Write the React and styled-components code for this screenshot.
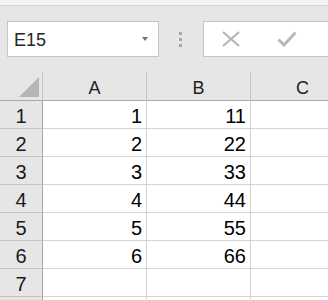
import React from "react";
import styled, { createGlobalStyle } from "styled-components";

const GlobalStyle = createGlobalStyle`
  html, body {
    margin: 0;
    padding: 0;
    background: #ffffff;
    overflow: hidden;
  }
  body {
    font-family: "Liberation Sans", Arial, sans-serif;
  }
`;

const Window = styled.div`
  width: 328px;
  height: 300px;
  overflow: hidden;
  background: #ffffff;
`;

const TopStrip = styled.div`
  height: 5px;
  background: #f3f3f3;
  border-bottom: 1px solid #d4d4d4;
`;

const Toolbar = styled.div`
  display: flex;
  align-items: center;
  height: 67px;
  box-sizing: border-box;
  padding: 15px 0 16px 7px;
  background: #e6e6e6;
`;

const NameBox = styled.div`
  box-sizing: border-box;
  width: 152px;
  height: 36px;
  display: flex;
  align-items: flex-start;
  justify-content: space-between;
  padding: 2px 10px 0 6px;
  background: #ffffff;
  border: 1px solid #c6c6c6;
  font-size: 18px;
  line-height: 32px;
  color: #262626;
`;

const DropArrow = styled.span`
  width: 0;
  height: 0;
  margin-top: 13px;
  border-left: 3.5px solid transparent;
  border-right: 3.5px solid transparent;
  border-top: 4px solid #707070;
`;

const Grip = styled.div`
  display: flex;
  flex-direction: column;
  gap: 3px;
  margin: 0 21px 0 20px;
`;

const GripDot = styled.span`
  width: 3px;
  height: 3px;
  background: #a6a6a6;
`;

const FormulaBox = styled.div`
  box-sizing: border-box;
  flex: 1;
  height: 36px;
  margin-right: -4px;
  display: flex;
  align-items: center;
  gap: 37px;
  padding-left: 18px;
  background: #ffffff;
  border: 1px solid #c6c6c6;
`;

const Sheet = styled.div`
  display: grid;
  grid-template-columns: 43px 104px 104px 104px;
  grid-auto-rows: 28px;
`;

const Corner = styled.div`
  box-sizing: border-box;
  display: flex;
  align-items: flex-end;
  justify-content: flex-end;
  padding: 0 3px 3px 0;
  background: #e6e6e6;
  border-right: 1px solid #c4c4c4;
  border-bottom: 1px solid #a9a9a9;
`;

const CornerMark = styled.span`
  width: 20px;
  height: 20px;
  background: #b5b5b5;
  clip-path: polygon(100% 0, 100% 100%, 0 100%);
`;

const ColHead = styled.div`
  box-sizing: border-box;
  background: #e6e6e6;
  border-right: 1px solid #c4c4c4;
  border-bottom: 1px solid #a9a9a9;
  padding-top: 4px;
  font-size: 18px;
  line-height: 23px;
  text-align: center;
  color: #1e1e1e;
`;

const RowHead = styled.div`
  box-sizing: border-box;
  background: #e6e6e6;
  border-right: 1px solid #a6a6a6;
  border-bottom: 1px solid #c2c2c2;
  padding-top: 3px;
  font-size: 20px;
  line-height: 24px;
  text-align: center;
  color: #1a1a1a;
`;

const Cell = styled.div`
  box-sizing: border-box;
  background: #ffffff;
  border-right: 1px solid #d4d4d4;
  border-bottom: 1px solid #d4d4d4;
  padding: 3px 4px 0 0;
  font-size: 20px;
  line-height: 24px;
  text-align: ${(p) => (p.$num ? "right" : "left")};
  color: #000000;
`;

const CancelIcon = () => (
  <svg width="18" height="16" viewBox="0 0 18 16">
    <path d="M1 1 L17 15 M17 1 L1 15" stroke="#b3b3b3" strokeWidth="2" fill="none" />
  </svg>
);

const EnterIcon = () => (
  <svg width="20" height="16" viewBox="0 0 20 16">
    <path d="M1.5 8.5 L7 14 L18.5 1.5" stroke="#b8b8b8" strokeWidth="3" fill="none" />
  </svg>
);

const rows = [
  [1, 11],
  [2, 22],
  [3, 33],
  [4, 44],
  [5, 55],
  [6, 66],
  [null, null],
  [null, null],
];

export default function App() {
  return (
    <Window>
      <GlobalStyle />
      <TopStrip />
      <Toolbar>
        <NameBox>
          <span>E15</span>
          <DropArrow />
        </NameBox>
        <Grip>
          <GripDot />
          <GripDot />
          <GripDot />
        </Grip>
        <FormulaBox>
          <CancelIcon />
          <EnterIcon />
        </FormulaBox>
      </Toolbar>
      <Sheet>
        <Corner>
          <CornerMark />
        </Corner>
        <ColHead>A</ColHead>
        <ColHead>B</ColHead>
        <ColHead>C</ColHead>
        {rows.map((r, i) => (
          <React.Fragment key={i}>
            {/* the 8th row only peeks in at the bottom edge, its label is below the fold */}
            <RowHead>{i < 7 ? i + 1 : null}</RowHead>
            <Cell $num>{r[0]}</Cell>
            <Cell $num>{r[1]}</Cell>
            <Cell />
          </React.Fragment>
        ))}
      </Sheet>
    </Window>
  );
}
